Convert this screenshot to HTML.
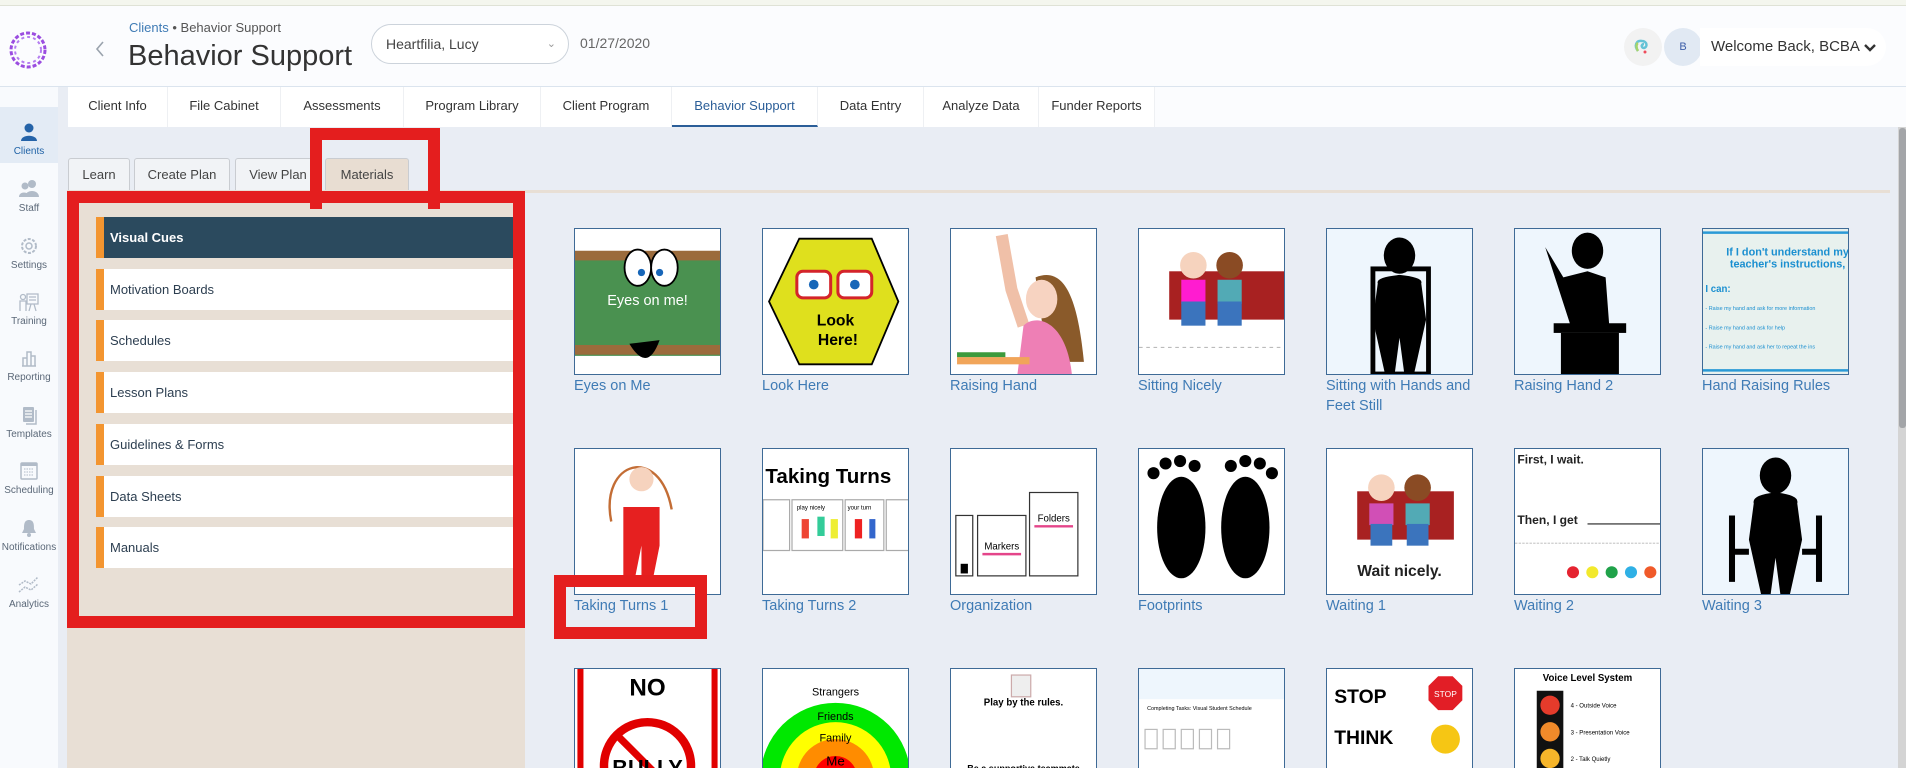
<!DOCTYPE html>
<html style="width:1906px;height:768px;overflow:hidden"><head><meta charset="utf-8"><style>
*{box-sizing:border-box;margin:0;padding:0}
html,body{width:1906px;height:768px;overflow:hidden}
body{position:relative;background:#e9edf4;font-family:"Liberation Sans",sans-serif;color:#2c3e50}
#wrap{position:absolute;left:0;top:0;width:1906px;height:768px;overflow:hidden}
.abs{position:absolute}
#strip{left:0;top:0;width:1906px;height:6px;background:#f4f6ee;border-bottom:1px solid #dfe2d6}
#header{left:0;top:6px;width:1906px;height:81px;background:#fbfcfe;border-bottom:1px solid #dbe4ee}
#side{left:0;top:87px;width:58px;height:681px;background:#f8fafd}
.si{position:absolute;left:0;width:58px;text-align:center;font-size:10px;color:#5b6878}
.si svg{display:block;margin:0 auto 4px}
#tabs{left:68px;top:87px;height:40px;display:flex;background:#fff}
#tabs div{height:40px;line-height:38px;font-size:13px;color:#333;border-right:1px solid #eef0f3;text-align:center;white-space:nowrap}
#tabs .act{color:#2b5e98;border-bottom:2px solid #2b5e98}
#tabfill{left:1155px;top:87px;width:751px;height:40px;background:#fbfcfe}
.st{position:absolute;top:158px;height:33px;border:1px solid #c9ccd1;border-bottom:none;border-radius:3px 3px 0 0;background:#f1f3f6;font-size:13px;line-height:32px;text-align:center;color:#444}
#beige{left:67px;top:190px;width:458px;height:578px;background:#e8dfd5}
.it{position:absolute;left:96px;width:418px;height:41px;background:#fff;border-left:8px solid #f39530;font-size:13px;line-height:41px;padding-left:6px;color:#2c3e50}
.red{position:absolute;border:12px solid #e41e1e}
.card{position:absolute;width:147px;height:147px;border:1px solid #3e6a96;background:#fff;overflow:hidden}
.card svg{width:145px;height:145px;display:block}
.lb{position:absolute;width:160px;font-size:14.5px;line-height:20px;color:#3f7bb5}
</style></head><body><div id="wrap">
<div id="strip" class="abs"></div>
<div id="header" class="abs"></div>
<svg class="abs" style="left:6px;top:28px" width="44" height="44" viewBox="0 0 44 44"><circle cx="22" cy="22" r="17" fill="none" stroke="#9b4de0" stroke-width="3" stroke-dasharray="4 2"/><circle cx="22" cy="22" r="13" fill="none" stroke="#b47cf0" stroke-width="2" stroke-dasharray="3 3"/></svg>
<svg class="abs" style="left:94px;top:40px" width="12" height="18" viewBox="0 0 12 18"><path d="M9 2 L3 9 L9 16" fill="none" stroke="#9aa3ad" stroke-width="1.6"/></svg>
<div class="abs" style="left:129px;top:20px;font-size:13px;color:#555"><span style="color:#3f7bb5">Clients</span> • Behavior Support</div>
<div class="abs" style="left:128px;top:40px;font-size:29px;color:#333">Behavior Support</div>
<div class="abs" style="left:371px;top:24px;width:198px;height:40px;border:1px solid #ccd3db;border-radius:20px;background:#fff;font-size:14px;line-height:38px;padding-left:14px;color:#444">Heartfilia, Lucy<span style="position:absolute;right:12px;color:#999;font-size:11px">&#8964;</span></div>
<div class="abs" style="left:580px;top:35px;font-size:14px;color:#666">01/27/2020</div>
<div class="abs" style="left:1624px;top:28px;width:38px;height:38px;border-radius:50%;background:#f2f2f2"></div>
<svg class="abs" style="left:1632px;top:36px" width="22" height="22" viewBox="0 0 22 22"><path d="M6 15 C2 10 4 4 10 5 C15 5 16 11 12 12 C9 12 9 8 12 8" fill="none" stroke="#66c3d6" stroke-width="2.5"/><path d="M6 15 C4 12 4 8 6 7" stroke="#a6d46a" stroke-width="2.5" fill="none"/><circle cx="13" cy="16" r="1.5" fill="#ee4b5b"/></svg>
<div class="abs" style="left:1664px;top:28px;width:38px;height:38px;border-radius:50%;background:#e1e9f3;font-size:11px;text-align:center;line-height:38px;color:#3d5ea8">B</div>
<div class="abs" style="left:1700px;top:28px;width:186px;height:38px;border-radius:0 19px 19px 0;background:#fff"></div>
<div class="abs" style="left:1711px;top:38px;font-size:15px;color:#333">Welcome Back, BCBA</div>
<svg class="abs" style="left:1863px;top:43px" width="14" height="10" viewBox="0 0 14 10"><path d="M2 2 L7 7 L12 2" fill="none" stroke="#333" stroke-width="2.4"/></svg>

<div id="side" class="abs"></div>
<div class="abs" style="left:0;top:107px;width:58px;height:56px;background:#e3ebf5"></div>
<div class="si" style="top:122px;color:#1f62a6"><svg width="20" height="20" viewBox="0 0 20 20"><circle cx="10" cy="6" r="4.5" fill="#2563a8"/><path d="M2 19 C2 12 18 12 18 19Z" fill="#2563a8"/></svg>Clients</div>
<div class="si" style="top:179px"><svg width="24" height="20" viewBox="0 0 24 20"><circle cx="8" cy="7" r="3.5" fill="#b1bbc8"/><circle cx="15" cy="5" r="4" fill="#b1bbc8"/><path d="M2 18 C2 12 12 12 12 18Z M8 18 C8 10 22 10 22 18Z" fill="#b1bbc8"/></svg>Staff</div>
<div class="si" style="top:236px"><svg width="20" height="20" viewBox="0 0 20 20"><circle cx="10" cy="10" r="7" fill="none" stroke="#b1bbc8" stroke-width="2" stroke-dasharray="3 1.5"/><circle cx="10" cy="10" r="3" fill="none" stroke="#b1bbc8" stroke-width="1.5"/></svg>Settings</div>
<div class="si" style="top:292px"><svg width="24" height="20" viewBox="0 0 24 20"><circle cx="6" cy="5" r="2.5" fill="none" stroke="#b1bbc8" stroke-width="1.3"/><path d="M3 19 V9 H9 V19 M10 2 H21 V12 H10 Z M12 5 H19 M12 8 H19 M14 12 L12 19 M17 12 L19 19" fill="none" stroke="#b1bbc8" stroke-width="1.3"/></svg>Training</div>
<div class="si" style="top:348px"><svg width="20" height="20" viewBox="0 0 20 20"><path d="M4 18 V10 H8 V18 M8 18 V4 H12 V18 M12 18 V8 H16 V18 M3 18 H17" fill="none" stroke="#b1bbc8" stroke-width="1.5"/></svg>Reporting</div>
<div class="si" style="top:405px"><svg width="20" height="20" viewBox="0 0 20 20"><rect x="4" y="2" width="11" height="15" rx="1" fill="#b1bbc8"/><path d="M6 6 H13 M6 9 H13 M6 12 H13" stroke="#fff" stroke-width="1.3"/><path d="M17 5 V19 H7" fill="none" stroke="#b1bbc8" stroke-width="1.5"/></svg>Templates</div>
<div class="si" style="top:461px"><svg width="20" height="20" viewBox="0 0 20 20"><rect x="2" y="2" width="16" height="16" rx="1" fill="none" stroke="#b1bbc8" stroke-width="1.5"/><rect x="2" y="2" width="16" height="3" fill="#b1bbc8"/><path d="M5 8 H15 M5 11 H15 M5 14 H15" stroke="#b1bbc8" stroke-dasharray="1.5 1"/></svg>Scheduling</div>
<div class="si" style="top:518px;left:-4px;width:66px"><svg width="20" height="20" viewBox="0 0 20 20"><path d="M10 2 C5 2 5 7 5 11 L3 15 H17 L15 11 C15 7 15 2 10 2Z" fill="#b1bbc8"/><circle cx="10" cy="17" r="2" fill="#b1bbc8"/></svg>Notifications</div>
<div class="si" style="top:575px"><svg width="24" height="20" viewBox="0 0 24 20"><path d="M2 10 L8 6 L14 9 L21 2 M2 17 L8 12 L14 15 L21 9" fill="none" stroke="#b1bbc8" stroke-width="1.5" stroke-dasharray="2 1"/></svg>Analytics</div>

<div id="tabs" class="abs">
<div style="width:100px">Client Info</div><div style="width:113px">File Cabinet</div><div style="width:123px">Assessments</div><div style="width:137px">Program Library</div><div style="width:131px">Client Program</div><div class="act" style="width:146px">Behavior Support</div><div style="width:106px">Data Entry</div><div style="width:115px">Analyze Data</div><div style="width:116px">Funder Reports</div>
</div>
<div id="tabfill" class="abs"></div>

<div class="st" style="left:68px;width:62px">Learn</div>
<div class="st" style="left:134px;width:96px">Create Plan</div>
<div class="st" style="left:235px;width:86px">View Plan</div>
<div class="st" style="left:325px;width:84px;background:#e8ddd2">Materials</div>

<div class="abs" style="left:525px;top:190px;width:1365px;height:3px;background:#e8dfd5"></div>
<div id="beige" class="abs"></div>
<div class="it" style="top:217px;background:#2b4a5e;color:#fff;font-weight:bold">Visual Cues</div>
<div class="it" style="top:269px">Motivation Boards</div>
<div class="it" style="top:320px">Schedules</div>
<div class="it" style="top:372px">Lesson Plans</div>
<div class="it" style="top:424px">Guidelines &amp; Forms</div>
<div class="it" style="top:476px">Data Sheets</div>
<div class="it" style="top:527px">Manuals</div>

<div class="card" style="left:574px;top:228px"><svg viewBox="0 0 120 120"><rect x="0" y="20" width="120" height="85" fill="#4a9150"/><rect y="18" width="120" height="8" fill="#9b6b3c"/><rect y="96" width="120" height="8" fill="#9b6b3c"/><ellipse cx="52" cy="32" rx="11" ry="15" fill="#fff" stroke="#000" stroke-width="1.5"/><ellipse cx="74" cy="32" rx="11" ry="15" fill="#fff" stroke="#000" stroke-width="1.5"/><circle cx="55" cy="36" r="3" fill="#1766b8"/><circle cx="70" cy="36" r="3" fill="#1766b8"/><text x="60" y="63" font-size="12" fill="#fff" text-anchor="middle" font-family="Liberation Sans">Eyes on me!</text><path d="M45 95 Q60 120 70 92" fill="#000"/></svg></div>
<div class="card" style="left:762px;top:228px"><svg viewBox="0 0 120 120"><polygon points="30,8 90,8 112,60 90,112 30,112 5,60" fill="#dfe01d" stroke="#000" stroke-width="1.5"/><rect x="28" y="35" width="28" height="22" rx="5" fill="#fff" stroke="#d4242a" stroke-width="2.5"/><rect x="62" y="35" width="28" height="22" rx="5" fill="#fff" stroke="#d4242a" stroke-width="2.5"/><circle cx="42" cy="46" r="4" fill="#1766b8"/><circle cx="76" cy="46" r="4" fill="#1766b8"/><text x="60" y="80" font-size="13" text-anchor="middle" font-weight="bold">Look</text><text x="62" y="96" font-size="13" text-anchor="middle" font-weight="bold">Here!</text></svg></div>
<div class="card" style="left:950px;top:228px"><svg viewBox="0 0 120 120"><path d="M42 5 L50 50 L60 80" stroke="#f0c0a8" stroke-width="10" fill="none"/><path d="M70 40 C95 30 105 60 110 110 L80 110 Z" fill="#8a5a2a"/><path d="M60 80 C70 70 95 75 100 120 L55 120 Z" fill="#ee7fb5"/><ellipse cx="75" cy="58" rx="13" ry="16" fill="#f7d3c1"/><rect x="5" y="106" width="60" height="6" fill="#f1a55a"/><rect x="5" y="102" width="40" height="4" fill="#3d9a3d"/></svg></div>
<div class="card" style="left:1138px;top:228px"><svg viewBox="0 0 120 120"><rect x="25" y="35" width="95" height="40" fill="#a82121"/><circle cx="45" cy="30" r="11" fill="#f6d3be"/><circle cx="75" cy="30" r="11" fill="#8a4b24"/><rect x="35" y="42" width="20" height="20" fill="#ff1cd0"/><rect x="65" y="42" width="20" height="20" fill="#52aab5"/><rect x="35" y="60" width="20" height="20" fill="#3b74bd"/><rect x="65" y="60" width="20" height="20" fill="#3b74bd"/><path d="M0 98 H120" stroke="#bbb" stroke-dasharray="3 3"/></svg></div>
<div class="card" style="left:1326px;top:228px;background:#eef6fd"><svg viewBox="0 0 120 120"><rect x="38" y="33" width="46" height="87" fill="none" stroke="#000" stroke-width="4"/><ellipse cx="60" cy="22" rx="13" ry="15" fill="#000"/><path d="M42 45 Q40 40 60 38 Q80 40 78 45 L82 75 L72 120 L64 120 L60 90 L56 120 L48 120 L38 75Z" fill="#000"/></svg></div>
<div class="card" style="left:1514px;top:228px;background:#eef6fd"><svg viewBox="0 0 120 120"><ellipse cx="60" cy="18" rx="13" ry="15" fill="#000"/><path d="M25 15 L40 40 L60 35 L75 40 L78 80 L46 80Z" fill="#000"/><rect x="32" y="78" width="60" height="8" fill="#000"/><rect x="38" y="86" width="48" height="40" fill="#000"/></svg></div>
<div class="card" style="left:1702px;top:228px"><svg viewBox="0 0 120 120"><rect width="120" height="120" fill="#e8f1ee"/><path d="M0 3 H120 M0 117 H120" stroke="#2a9ad6" stroke-width="2"/><text x="70" y="22" font-size="9" fill="#1a8fd0" text-anchor="middle" font-weight="bold">If I don't understand my</text><text x="70" y="32" font-size="9" fill="#1a8fd0" text-anchor="middle" font-weight="bold">teacher's instructions,</text><text x="2" y="52" font-size="8" fill="#1a8fd0" font-weight="bold">I can:</text><text x="2" y="67" font-size="4.5" fill="#1a8fd0">- Raise my hand and ask for more information</text><text x="2" y="83" font-size="4.5" fill="#1a8fd0">- Raise my hand and ask for help</text><text x="2" y="99" font-size="4.5" fill="#1a8fd0">- Raise my hand and ask her to repeat the ins</text></svg></div>
<div class="lb" style="left:574px;top:376px">Eyes on Me</div>
<div class="lb" style="left:762px;top:376px">Look Here</div>
<div class="lb" style="left:950px;top:376px">Raising Hand</div>
<div class="lb" style="left:1138px;top:376px">Sitting Nicely</div>
<div class="lb" style="left:1326px;top:376px">Sitting with Hands and Feet Still</div>
<div class="lb" style="left:1514px;top:376px">Raising Hand 2</div>
<div class="lb" style="left:1702px;top:376px">Hand Raising Rules</div>

<div class="card" style="left:574px;top:448px"><svg viewBox="0 0 120 120"><path d="M30 60 C20 10 70 -5 80 50" stroke="#c36d35" stroke-width="2" fill="none"/><circle cx="55" cy="25" r="10" fill="#f6d3be"/><path d="M40 48 H70 V80 L65 105 L55 105 L55 80 L50 105 L40 105 Z" fill="#e62020"/></svg></div>
<div class="card" style="left:762px;top:448px"><svg viewBox="0 0 120 120"><text x="2" y="28" font-size="17" font-weight="bold" font-family="Liberation Sans">Taking Turns</text><rect x="0" y="42" width="22" height="42" fill="#fff" stroke="#aaa"/><rect x="24" y="42" width="42" height="42" fill="#fff" stroke="#aaa"/><rect x="68" y="42" width="32" height="42" fill="#fff" stroke="#aaa"/><rect x="102" y="42" width="20" height="42" fill="#fff" stroke="#aaa"/><text x="28" y="50" font-size="5">play nicely</text><text x="70" y="50" font-size="5">your turn</text><rect x="32" y="58" width="6" height="16" fill="#e43"/><rect x="45" y="56" width="6" height="16" fill="#3c9"/><rect x="56" y="58" width="6" height="16" fill="#ee3"/><rect x="76" y="58" width="6" height="16" fill="#e22"/><rect x="88" y="58" width="5" height="16" fill="#36c"/></svg></div>
<div class="card" style="left:950px;top:448px"><svg viewBox="0 0 120 120"><rect x="4" y="55" width="14" height="50" fill="#fff" stroke="#333"/><rect x="8" y="95" width="6" height="8" fill="#000"/><rect x="22" y="55" width="40" height="50" fill="#fff" stroke="#333"/><rect x="65" y="36" width="40" height="69" fill="#fff" stroke="#333"/><text x="42" y="83" font-size="8" text-anchor="middle">Markers</text><text x="85" y="60" font-size="8" text-anchor="middle">Folders</text><path d="M26 87 H58 M69 64 H101" stroke="#e4458a" stroke-width="2"/></svg></div>
<div class="card" style="left:1138px;top:448px"><svg viewBox="0 0 120 120"><ellipse cx="35" cy="65" rx="20" ry="42" fill="#000"/><ellipse cx="88" cy="65" rx="20" ry="42" fill="#000"/><circle cx="12" cy="20" r="5"/><circle cx="22" cy="12" r="5"/><circle cx="34" cy="10" r="5"/><circle cx="46" cy="14" r="5"/><circle cx="76" cy="14" r="5"/><circle cx="88" cy="10" r="5"/><circle cx="100" cy="12" r="5"/><circle cx="110" cy="20" r="5"/></svg></div>
<div class="card" style="left:1326px;top:448px"><svg viewBox="0 0 120 120"><rect x="25" y="35" width="80" height="40" fill="#a82121"/><circle cx="45" cy="32" r="11" fill="#f6d3be"/><circle cx="75" cy="32" r="11" fill="#8a4b24"/><rect x="35" y="45" width="20" height="18" fill="#d14fb6"/><rect x="65" y="45" width="20" height="18" fill="#52aab5"/><rect x="36" y="62" width="18" height="18" fill="#3b74bd"/><rect x="66" y="62" width="18" height="18" fill="#3b74bd"/><text x="60" y="105" font-size="13" font-weight="bold" text-anchor="middle" fill="#222">Wait nicely.</text></svg></div>
<div class="card" style="left:1514px;top:448px"><svg viewBox="0 0 120 120"><text x="2" y="12" font-size="10" font-weight="bold" fill="#222">First, I wait.</text><text x="2" y="62" font-size="10" font-weight="bold" fill="#222">Then, I get</text><path d="M60 62 H120" stroke="#222"/><path d="M0 78 H120" stroke="#ccc" stroke-dasharray="2 1"/><circle cx="48" cy="102" r="5" fill="#e52330"/><circle cx="64" cy="102" r="5" fill="#f2e92c"/><circle cx="80" cy="102" r="5" fill="#20a24a"/><circle cx="96" cy="102" r="5" fill="#2fb0e5"/><circle cx="112" cy="102" r="5" fill="#f05a2a"/></svg></div>
<div class="card" style="left:1702px;top:448px;background:#eef6fd"><svg viewBox="0 0 120 120"><ellipse cx="60" cy="22" rx="13" ry="15" fill="#000"/><path d="M42 45 Q40 38 60 36 Q80 38 78 45 L82 75 L72 120 L64 120 L60 90 L56 120 L48 120 L38 75Z" fill="#000"/><path d="M24 55 V110 M96 55 V110 M24 85 H38 M82 85 H96" stroke="#000" stroke-width="5"/></svg></div>
<div class="lb" style="left:574px;top:596px">Taking Turns 1</div>
<div class="lb" style="left:762px;top:596px">Taking Turns 2</div>
<div class="lb" style="left:950px;top:596px">Organization</div>
<div class="lb" style="left:1138px;top:596px">Footprints</div>
<div class="lb" style="left:1326px;top:596px">Waiting 1</div>
<div class="lb" style="left:1514px;top:596px">Waiting 2</div>
<div class="lb" style="left:1702px;top:596px">Waiting 3</div>

<div class="card" style="left:574px;top:668px"><svg viewBox="0 0 120 120"><rect x="2" y="0" width="5" height="120" fill="#e10000"/><rect x="113" y="0" width="5" height="120" fill="#e10000"/><text x="60" y="22" font-size="20" font-weight="bold" text-anchor="middle">NO</text><circle cx="60" cy="80" r="36" fill="none" stroke="#e10000" stroke-width="7"/><path d="M35 55 L85 105" stroke="#e10000" stroke-width="6"/><text x="60" y="88" font-size="18" font-weight="bold" text-anchor="middle">BULLY</text></svg></div>
<div class="card" style="left:762px;top:668px"><svg viewBox="0 0 120 120"><circle cx="60" cy="90" r="62" fill="#00e800"/><circle cx="60" cy="90" r="46" fill="#ffff00"/><circle cx="60" cy="90" r="32" fill="#ff8c00"/><circle cx="60" cy="90" r="18" fill="#ff0000"/><text x="60" y="22" font-size="9" text-anchor="middle">Strangers</text><text x="60" y="42" font-size="9" text-anchor="middle">Friends</text><text x="60" y="60" font-size="9" text-anchor="middle">Family</text><text x="60" y="80" font-size="11" text-anchor="middle">Me</text></svg></div>
<div class="card" style="left:950px;top:668px"><svg viewBox="0 0 120 120"><text x="60" y="30" font-size="8" font-weight="bold" text-anchor="middle">Play by the rules.</text><text x="60" y="85" font-size="7.5" font-weight="bold" text-anchor="middle">Be a supportive teammate</text><rect x="50" y="5" width="16" height="18" fill="#eee" stroke="#caa"/></svg></div>
<div class="card" style="left:1138px;top:668px"><svg viewBox="0 0 120 120"><rect width="120" height="25" fill="#eef6fd"/><text x="50" y="34" font-size="4.5" text-anchor="middle">Completing Tasks: Visual Student Schedule</text><g fill="none" stroke="#bbb"><rect x="5" y="50" width="10" height="16"/><rect x="20" y="50" width="10" height="16"/><rect x="35" y="50" width="10" height="16"/><rect x="50" y="50" width="10" height="16"/><rect x="65" y="50" width="10" height="16"/><rect x="5" y="90" width="10" height="16"/><rect x="20" y="90" width="10" height="16"/><rect x="35" y="90" width="10" height="16"/><rect x="50" y="90" width="10" height="16"/><rect x="65" y="90" width="10" height="16"/></g></svg></div>
<div class="card" style="left:1326px;top:668px"><svg viewBox="0 0 120 120"><text x="6" y="28" font-size="16" font-weight="bold">STOP</text><text x="6" y="62" font-size="16" font-weight="bold">THINK</text><text x="6" y="94" font-size="16" font-weight="bold">AND</text><polygon points="92,6 104,6 112,14 112,26 104,34 92,34 84,26 84,14" fill="#e21e26"/><text x="98" y="23" font-size="7" fill="#fff" text-anchor="middle">STOP</text><circle cx="98" cy="58" r="12" fill="#f6c614"/></svg></div>
<div class="card" style="left:1514px;top:668px"><svg viewBox="0 0 120 120"><text x="60" y="10" font-size="8" font-weight="bold" text-anchor="middle">Voice Level System</text><rect x="18" y="18" width="22" height="102" fill="#111"/><circle cx="29" cy="30" r="8" fill="#e53b2b"/><circle cx="29" cy="52" r="8" fill="#f08a2a"/><circle cx="29" cy="74" r="8" fill="#f6b52a"/><circle cx="29" cy="96" r="8" fill="#f6d42a"/><text x="46" y="32" font-size="5">4 - Outside Voice</text><text x="46" y="54" font-size="5">3 - Presentation Voice</text><text x="46" y="76" font-size="5">2 - Talk Quietly</text><text x="46" y="98" font-size="5">1 - Whisper</text></svg></div>

<div class="abs" style="left:1898px;top:127px;width:8px;height:641px;background:#d4d4d4"></div>
<div class="abs" style="left:1899px;top:128px;width:7px;height:300px;background:#a3a5a8;border-radius:3px"></div>

<div class="red" style="left:67px;top:191px;width:458px;height:437px"></div>
<div class="red" style="left:310px;top:128px;width:130px;height:81px;border-bottom:none"></div>
<div class="red" style="left:554px;top:575px;width:153px;height:64px"></div>
</div></body></html>
